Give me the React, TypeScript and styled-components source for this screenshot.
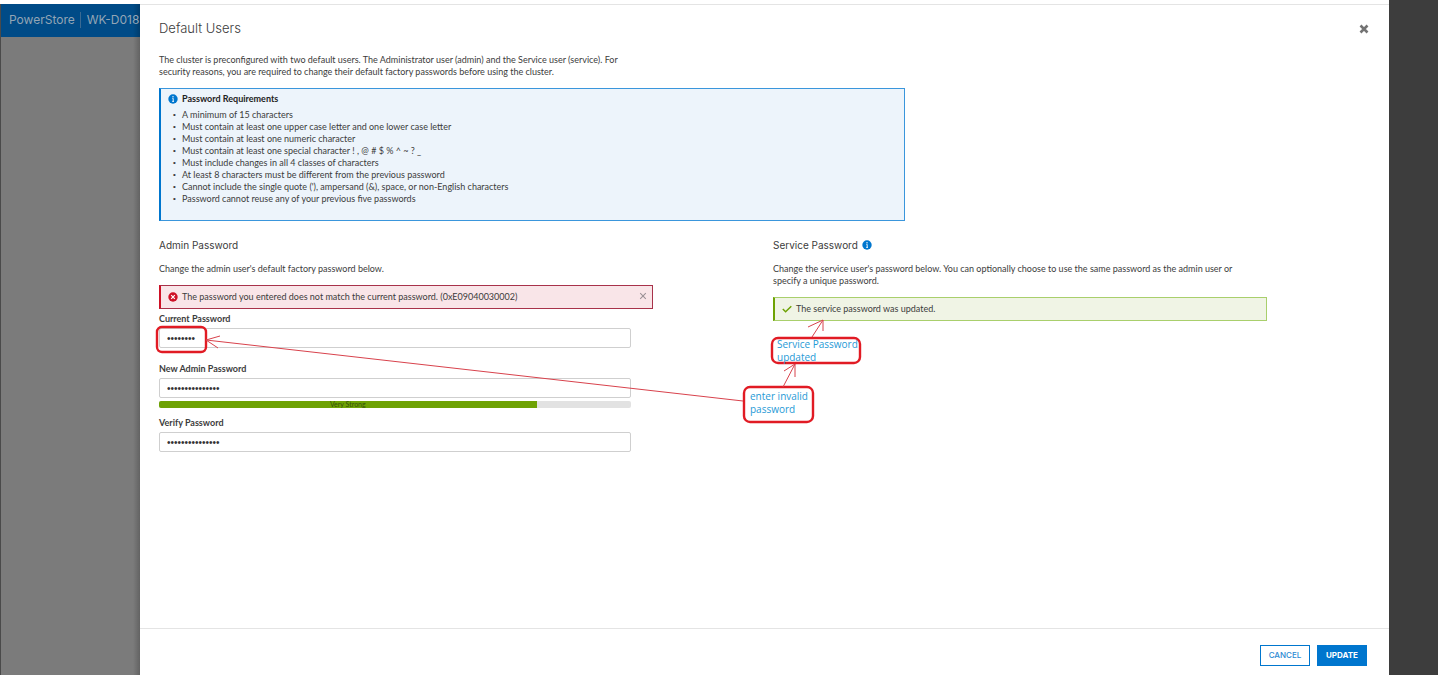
import React from "react";
import styled, { createGlobalStyle, css } from "styled-components";

const GlobalStyle = createGlobalStyle`
  *, *::before, *::after { box-sizing: border-box; }
  body {
    margin: 0;
    background: #fff;
    color: #3c3c3c;
    font-family: Lato, "Open Sans", sans-serif;
    font-size: 9px;
    line-height: 12px;
  }
  h1, h2, h3, p, ul { margin: 0; }
  button, input { font: inherit; }
`;

const Screen = styled.div`
  position: relative;
  display: flex;
  min-height: 100vh;
  padding-top: 4px;
  overflow: hidden;
`;

const Backdrop = styled.div`
  flex: 0 0 140px;
  min-width: 0;
  background: linear-gradient(to right, transparent 132px, rgba(0, 0, 0, 0.2)), #7b7b7b;
  border-left: 1px solid #4a4a4a;
`;

const AppBar = styled.header`
  display: flex;
  align-items: center;
  height: 33px;
  padding: 0 0 2px 8px;
  background: linear-gradient(to right, transparent 132px, rgba(0, 0, 0, 0.2)), #004b87;
  color: #93a5b5;
  font-family: Inter, sans-serif;
  font-size: 12px;
  line-height: 16px;
  white-space: nowrap;
`;

const Cluster = styled.span`
  margin-left: 5px;
  padding-left: 6px;
  border-left: 1px solid #3b6a92;
`;

const Drawer = styled.main`
  display: flex;
  flex: 1;
  flex-direction: column;
  min-width: 0;
  background: #fff;
  border-top: 1px solid #e4e4e4;
`;

const Gutter = styled.div`
  flex: 0 0 49px;
  margin-top: -4px;
  background: #3d3d3d;
`;

const DrawerHeader = styled.div`
  display: flex;
  align-items: flex-end;
  justify-content: space-between;
  padding: 15px 20px 18px 19px;
`;

const Title = styled.h1`
  font-family: Inter, sans-serif;
  font-size: 13px;
  font-weight: 300;
  line-height: 16px;
`;

const CloseButton = styled.button<{ $small?: boolean }>`
  display: flex;
  padding: 0 0 2px;
  border: 0;
  background: none;
  color: ${(p) => (p.$small ? "#9a9095" : "#737373")};
`;

const Content = styled.div`
  flex: 1;
  padding: 0 2px 0 19px;
`;

const Intro = styled.p`
  max-width: 470px;
`;

const Requirements = styled.section`
  width: 746px;
  max-width: 100%;
  margin-top: 10px;
  padding: 4px 8px 15px 7px;
  background: #edf4fb;
  border: 1px solid #3a96dc;
  border-left: 2px solid #0076ce;
`;

const RequirementsTitle = styled.h3`
  display: flex;
  align-items: center;
  gap: 4px;
  font-size: 9px;
  font-weight: 700;
  color: #222;
`;

const RequirementList = styled.ul`
  margin-top: 4px;
  padding: 0 0 0 5px;
  list-style: none;
`;

const Requirement = styled.li`
  display: flex;

  &::before {
    content: "•";
    flex: 0 0 9px;
    font-family: "Liberation Sans", sans-serif;
    font-size: 8px;
  }
`;

const Columns = styled.div`
  display: grid;
  grid-template-columns: 1fr 1fr;
  margin-top: 16px;
`;

const SectionTitle = styled.h2`
  display: flex;
  align-items: center;
  gap: 4px;
  margin-bottom: 10px;
  font-family: Inter, sans-serif;
  font-size: 10px;
  font-weight: 400;
  line-height: 16px;
`;

const Hint = styled.p`
  max-width: 470px;
`;

const Alert = styled.div<{ $tone: "error" | "success" }>`
  display: flex;
  align-items: center;
  gap: 4px;
  width: 494px;
  max-width: 100%;
  height: 24px;
  margin-top: 10px;
  padding: 0 5px 0 7px;
  border: 1px solid;
  border-left-width: 2px;
  ${(p) =>
    p.$tone === "error"
      ? css`
          background: #f9e5e8;
          border-color: #a8324a;
          border-left-color: #ce1126;
        `
      : css`
          background: #f0f4e5;
          border-color: #a9cf6c;
          border-left-color: #6ea204;
        `}
`;

const AlertText = styled.span`
  flex: 1;
`;

const Form = styled.form`
  width: 472px;
  max-width: 100%;
  padding-top: 4px;
`;

const Field = styled.div<{ $gap: number }>`
  margin-bottom: ${(p) => p.$gap}px;
`;

const Label = styled.label`
  display: block;
  height: 15px;
  font-weight: 700;
`;

const PasswordInput = styled.input`
  display: block;
  width: 100%;
  height: 20px;
  padding: 0 7px;
  border: 1px solid #cfcfcf;
  border-radius: 2px;
  background: #fff;
  color: #333;
  font-family: "Liberation Sans", sans-serif;
  font-size: 10px;
  outline: none;
`;

const Meter = styled.div`
  height: 7px;
  margin-top: 3px;
  overflow: hidden;
  border-radius: 2px;
  background: #e2e2e2;
`;

const MeterFill = styled.div`
  width: 80%;
  height: 100%;
  background: #6ea204;
  color: #33500a;
  font-size: 7px;
  line-height: 7px;
  text-align: center;
`;

const Footer = styled.footer`
  display: flex;
  justify-content: flex-end;
  gap: 7px;
  padding: 16px 22px 9px;
  border-top: 1px solid #e4e4e4;
`;

const ActionButton = styled.button<{ $primary?: boolean }>`
  min-width: 50px;
  height: 21px;
  padding: 0 7px 2px;
  border: 1px solid #0076ce;
  background: ${(p) => (p.$primary ? "#0076ce" : "#fff")};
  color: ${(p) => (p.$primary ? "#fff" : "#2b8ad3")};
  font-family: Inter, sans-serif;
  font-size: 8px;
  font-weight: ${(p) => (p.$primary ? 700 : 500)};
`;

const Markup = styled.svg`
  position: absolute;
  top: 0;
  left: 0;
  pointer-events: none;
`;

const Note = styled.p<{ $x: number; $y: number }>`
  position: absolute;
  left: ${(p) => p.$x}px;
  top: ${(p) => p.$y}px;
  color: #1f9ad6;
  font-family: "Open Sans", sans-serif;
  font-size: 10px;
  line-height: 13px;
  white-space: pre-line;
`;

const requirements = [
  "A minimum of 15 characters",
  "Must contain at least one upper case letter and one lower case letter",
  "Must contain at least one numeric character",
  "Must contain at least one special character ! , @ # $ % ^ ~ ? _",
  "Must include changes in all 4 classes of characters",
  "At least 8 characters must be different from the previous password",
  "Cannot include the single quote ('), ampersand (&), space, or non-English characters",
  "Password cannot reuse any of your previous five passwords",
];

const InfoIcon = () => (
  <svg width="10" height="10" viewBox="0 0 10 10" aria-hidden="true">
    <circle cx="5" cy="5" r="4.7" fill="#0076ce" />
    <circle cx="5" cy="2.8" r="0.7" fill="#fff" />
    <path d="M4.4 4.4H5.2V7.4M4.2 7.4H6" stroke="#fff" strokeWidth="0.9" fill="none" />
  </svg>
);

const ErrorIcon = () => (
  <svg width="10" height="10" viewBox="0 0 10 10" aria-hidden="true">
    <circle cx="5" cy="5" r="4.7" fill="#ce1126" />
    <path d="M3.2 3.2L6.8 6.8M6.8 3.2L3.2 6.8" stroke="#fff" strokeWidth="1.2" />
  </svg>
);

const CheckIcon = () => (
  <svg width="10" height="10" viewBox="0 0 10 10" aria-hidden="true">
    <path d="M0.8 5L3.6 7.7L9.3 2.3" stroke="#6ea204" strokeWidth="1.5" fill="none" />
  </svg>
);

const CrossIcon = ({ size, weight }: { size: number; weight: number }) => (
  <svg width={size} height={size} viewBox="0 0 10 10" aria-hidden="true">
    <path d="M1.5 1.5L8.5 8.5M8.5 1.5L1.5 8.5" stroke="currentColor" strokeWidth={weight} />
  </svg>
);

export default function App() {
  return (
    <>
      <GlobalStyle />
      <Screen>
        <Backdrop>
          <AppBar>
            <span>PowerStore</span>
            <Cluster>WK-D018</Cluster>
          </AppBar>
        </Backdrop>
        <Drawer>
          <DrawerHeader>
            <Title>Default Users</Title>
            <CloseButton type="button" aria-label="Close">
              <CrossIcon size={10} weight={2.6} />
            </CloseButton>
          </DrawerHeader>
          <Content>
            <Intro>
              The cluster is preconfigured with two default users. The Administrator user (admin) and the Service
              user (service). For security reasons, you are required to change their default factory passwords before
              using the cluster.
            </Intro>
            <Requirements>
              <RequirementsTitle>
                <InfoIcon />
                Password Requirements
              </RequirementsTitle>
              <RequirementList>
                {requirements.map((text) => (
                  <Requirement key={text}>{text}</Requirement>
                ))}
              </RequirementList>
            </Requirements>
            <Columns>
              <section>
                <SectionTitle>Admin Password</SectionTitle>
                <Hint>Change the admin user's default factory password below.</Hint>
                <Alert $tone="error" role="alert">
                  <ErrorIcon />
                  <AlertText>The password you entered does not match the current password. (0xE09040030002)</AlertText>
                  <CloseButton type="button" $small aria-label="Dismiss">
                    <CrossIcon size={8} weight={1.3} />
                  </CloseButton>
                </Alert>
                <Form>
                  <Field $gap={15}>
                    <Label htmlFor="current">Current Password</Label>
                    <PasswordInput id="current" type="password" defaultValue="abcdefgh" />
                  </Field>
                  <Field $gap={9}>
                    <Label htmlFor="new">New Admin Password</Label>
                    <PasswordInput id="new" type="password" defaultValue="abcdefghijklmno" />
                    <Meter>
                      <MeterFill>Very Strong</MeterFill>
                    </Meter>
                  </Field>
                  <Field $gap={0}>
                    <Label htmlFor="verify">Verify Password</Label>
                    <PasswordInput id="verify" type="password" defaultValue="abcdefghijklmno" />
                  </Field>
                </Form>
              </section>
              <section>
                <SectionTitle>
                  Service Password <InfoIcon />
                </SectionTitle>
                <Hint>
                  Change the service user's password below. You can optionally choose to use the same password as the
                  admin user or specify a unique password.
                </Hint>
                <Alert $tone="success" role="status">
                  <CheckIcon />
                  <AlertText>The service password was updated.</AlertText>
                </Alert>
              </section>
            </Columns>
          </Content>
          <Footer>
            <ActionButton type="button">CANCEL</ActionButton>
            <ActionButton type="button" $primary>
              UPDATE
            </ActionButton>
          </Footer>
        </Drawer>
        <Gutter />
        <Markup width="900" height="440" viewBox="0 0 900 440" fill="none" aria-hidden="true">
          <g stroke="#e11b24" strokeWidth="2.4">
            <rect x="157" y="327" width="49" height="25" rx="5" />
            <rect x="772" y="338" width="88" height="25" rx="6" />
            <rect x="744" y="387" width="69" height="35" rx="6" />
          </g>
          <g stroke="#d8424c" strokeWidth="1">
            <path d="M743 401L206 340M220 336L206 340L218 348" />
            <path d="M812 337L823 320M808 327L823 320V331" />
            <path d="M783 387L795 364M784 371L795 364V377" />
          </g>
        </Markup>
        <Note $x={777} $y={338}>{"Service Password\nupdated"}</Note>
        <Note $x={750} $y={390}>{"enter invalid\npassword"}</Note>
      </Screen>
    </>
  );
}
